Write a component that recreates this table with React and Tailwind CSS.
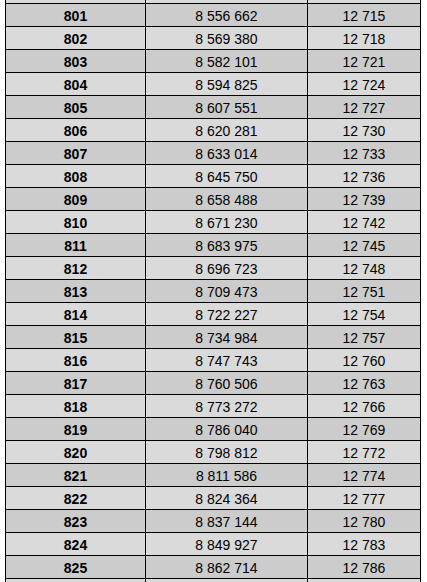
const rows = [
  ["", "", ""],
  ["801", "8 556 662", "12 715"],
  ["802", "8 569 380", "12 718"],
  ["803", "8 582 101", "12 721"],
  ["804", "8 594 825", "12 724"],
  ["805", "8 607 551", "12 727"],
  ["806", "8 620 281", "12 730"],
  ["807", "8 633 014", "12 733"],
  ["808", "8 645 750", "12 736"],
  ["809", "8 658 488", "12 739"],
  ["810", "8 671 230", "12 742"],
  ["811", "8 683 975", "12 745"],
  ["812", "8 696 723", "12 748"],
  ["813", "8 709 473", "12 751"],
  ["814", "8 722 227", "12 754"],
  ["815", "8 734 984", "12 757"],
  ["816", "8 747 743", "12 760"],
  ["817", "8 760 506", "12 763"],
  ["818", "8 773 272", "12 766"],
  ["819", "8 786 040", "12 769"],
  ["820", "8 798 812", "12 772"],
  ["821", "8 811 586", "12 774"],
  ["822", "8 824 364", "12 777"],
  ["823", "8 837 144", "12 780"],
  ["824", "8 849 927", "12 783"],
  ["825", "8 862 714", "12 786"],
  ["", "", ""],
];

export default function App() {
  return (
    <div className="h-[582px] w-[427px] overflow-hidden bg-white" style={{ fontFamily: '"Liberation Sans", Arial, sans-serif' }}>
      <div className="ml-[5px] mt-[-20px] w-[416px] grid grid-cols-[139px_161px_112px] gap-px bg-black p-px text-[14px] text-black">
        {rows.map((r, i) => {
          const bg = i % 2 === 1 ? "bg-[#cccccc]" : "bg-[#dadada]";
          return [
            <div key={i + "a"} className={`${bg} h-[22px] pt-[2px] flex items-center justify-center font-bold`}>{r[0]}</div>,
            <div key={i + "b"} className={`${bg} h-[22px] pt-[2px] flex items-center justify-center`}>{r[1]}</div>,
            <div key={i + "c"} className={`${bg} h-[22px] pt-[2px] flex items-center justify-center`}>{r[2]}</div>,
          ];
        })}
      </div>
    </div>
  );
}
